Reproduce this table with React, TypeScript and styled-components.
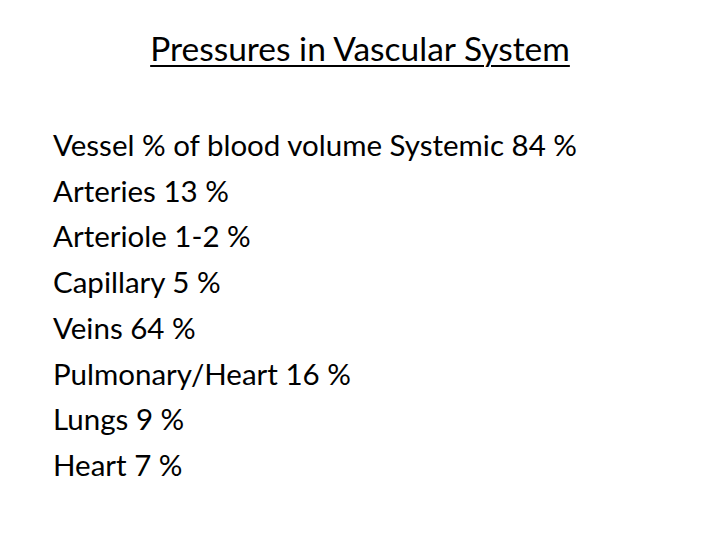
import { createGlobalStyle } from "styled-components";
import styled from "styled-components";

const GlobalStyle = createGlobalStyle`
  html, body {
    margin: 0;
    padding: 0;
    background: #ffffff;
  }
`;

const Slide = styled.div`
  width: 720px;
  height: 540px;
  background: #ffffff;
  color: #000000;
  font-family: Lato, "Open Sans", sans-serif;
  display: flex;
  flex-direction: column;
  box-sizing: border-box;
  padding-top: 26px;
`;

const Title = styled.h1`
  margin: 0;
  font-size: 33.5px;
  font-weight: 400;
  text-align: center;
  line-height: 44px;
  text-decoration: underline;
  text-decoration-thickness: 2px;
  text-underline-offset: 4px;
`;

const List = styled.div`
  display: flex;
  flex-direction: column;
  padding: 52px 0 0 53px;
`;

const Line = styled.div`
  font-size: 29.5px;
  line-height: 45.7px;
  white-space: nowrap;
`;

const rows = [
  "Vessel % of blood volume Systemic 84 %",
  "Arteries 13 %",
  "Arteriole 1-2 %",
  "Capillary 5 %",
  "Veins 64 %",
  "Pulmonary/Heart 16 %",
  "Lungs 9 %",
  "Heart 7 %",
];

export default function App() {
  return (
    <Slide>
      <GlobalStyle />
      <Title>Pressures in Vascular System</Title>
      <List>
        {rows.map((r) => (
          <Line key={r}>{r}</Line>
        ))}
      </List>
    </Slide>
  );
}
